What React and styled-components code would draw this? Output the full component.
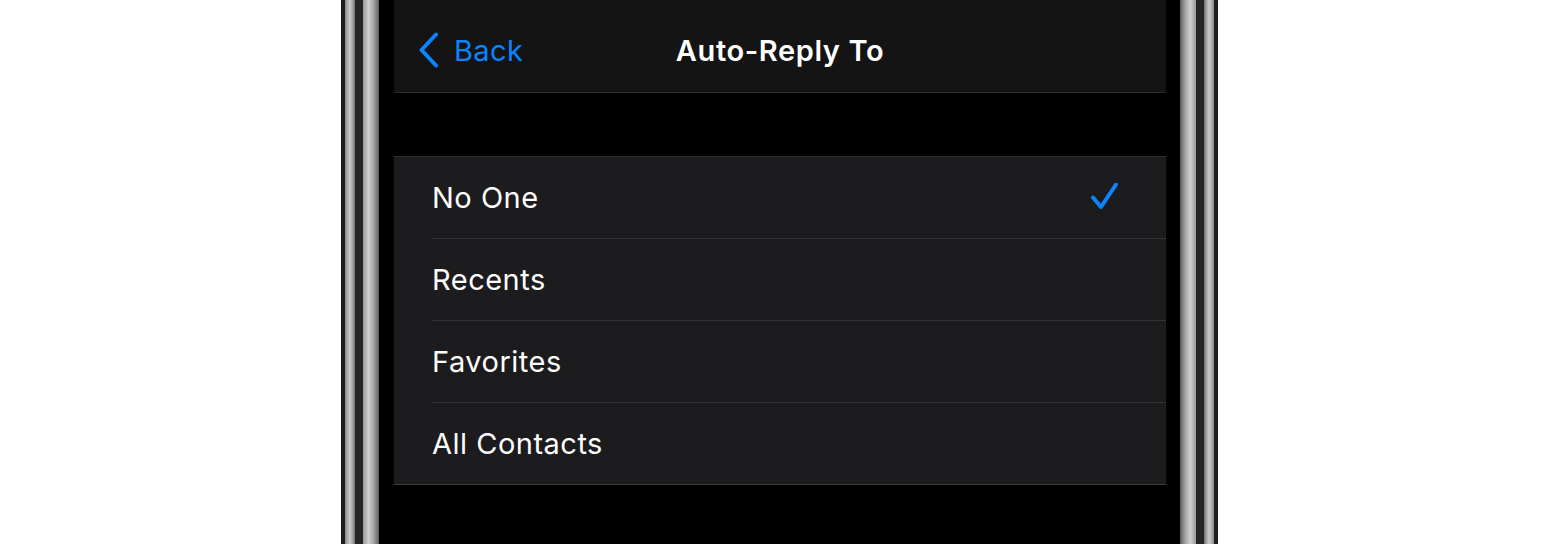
import React, { useState } from 'react';
import styled, { createGlobalStyle } from 'styled-components';

const GlobalStyle = createGlobalStyle`
  html, body {
    margin: 0;
    padding: 0;
    background: #ffffff;
  }
  body {
    font-family: Inter, "Noto Sans", "Liberation Sans", sans-serif;
    -webkit-font-smoothing: antialiased;
  }
`;

const Page = styled.div`
  width: 1560px;
  height: 544px;
  overflow: hidden;
  display: flex;
  padding-left: 341px;
  box-sizing: border-box;
`;

const Phone = styled.div`
  width: 877px;
  height: 544px;
  display: flex;
`;

const Band = styled.div`
  flex: 0 0 ${(p) => p.$w}px;
  background: ${(p) => p.$bg};
`;

const Screen = styled.div`
  flex: 1;
  background: #000;
  padding: 0 14px 0 15px;
  display: flex;
  flex-direction: column;
`;

const NavBar = styled.header`
  height: 93px;
  box-sizing: border-box;
  background: #141414;
  border-bottom: 1px solid #2a2a2a;
  display: grid;
  grid-template-columns: 1fr auto 1fr;
  align-items: center;
  padding: 8px 24px 0 24px;
`;

const BackButton = styled.button`
  justify-self: start;
  display: flex;
  align-items: center;
  gap: 14px;
  background: none;
  border: 0;
  padding: 0;
  color: #0a84ff;
  font: inherit;
  font-size: 29px;
  letter-spacing: 0.4px;
  cursor: pointer;
`;

const Title = styled.h1`
  margin: 0;
  color: #fff;
  font-size: 29px;
  font-weight: 600;
  letter-spacing: 0.6px;
`;

const Spacer = styled.div`
  height: 63px;
`;

const Group = styled.ul`
  list-style: none;
  margin: 0;
  padding: 0;
  background: #1c1c1e;
  border-top: 1px solid #2c2c2e;
  border-bottom: 1px solid #38383a;
`;

const Row = styled.li`
  margin-left: 38px;
  height: 81px;
  display: flex;
  align-items: center;
  justify-content: space-between;
  padding-right: 46px;
  color: #fff;
  font-size: 29px;
  letter-spacing: 0.5px;
  border-bottom: ${(p) => (p.$last ? 'none' : '1px solid #333335')};
  cursor: pointer;
`;

const Chevron = () => (
  <svg width="22" height="36" viewBox="0 0 22 36" fill="none">
    <path
      d="M18 2.5 L3.5 18 L18 33.5"
      stroke="#0a84ff"
      strokeWidth="4"
      strokeLinecap="round"
      strokeLinejoin="round"
    />
  </svg>
);

const Check = () => (
  <svg width="30" height="30" viewBox="0 0 30 30" fill="none">
    <path
      d="M3 14.5 L11 24 L26 1.5"
      stroke="#0a84ff"
      strokeWidth="4"
      strokeLinecap="round"
      strokeLinejoin="round"
    />
  </svg>
);

const options = ['No One', 'Recents', 'Favorites', 'All Contacts'];

export default function App() {
  const [selected, setSelected] = useState('No One');

  return (
    <>
      <GlobalStyle />
      <Page>
        <Phone>
          <Band $w={4} $bg="#1e1e1e" />
          <Band $w={10} $bg="linear-gradient(90deg, #8a8a8a, #c9c9c9 45%, #b0b0b0 70%, #6e6e6e)" />
          <Band $w={8} $bg="#262626" />
          <Band $w={16} $bg="linear-gradient(90deg, #9a9a9a, #cfcfcf 35%, #a9a9a9 65%, #5c5c5c)" />
          <Screen>
            <NavBar>
              <BackButton>
                <Chevron />
                Back
              </BackButton>
              <Title>Auto-Reply To</Title>
            </NavBar>
            <Spacer />
            <Group>
              {options.map((opt, i) => (
                <Row
                  key={opt}
                  $last={i === options.length - 1}
                  onClick={() => setSelected(opt)}
                >
                  {opt}
                  {selected === opt && <Check />}
                </Row>
              ))}
            </Group>
          </Screen>
          <Band $w={16} $bg="linear-gradient(90deg, #5c5c5c, #a9a9a9 35%, #cfcfcf 65%, #9a9a9a)" />
          <Band $w={8} $bg="#262626" />
          <Band $w={10} $bg="linear-gradient(90deg, #6e6e6e, #b0b0b0 30%, #c9c9c9 55%, #8a8a8a)" />
          <Band $w={4} $bg="#1e1e1e" />
        </Phone>
      </Page>
    </>
  );
}
